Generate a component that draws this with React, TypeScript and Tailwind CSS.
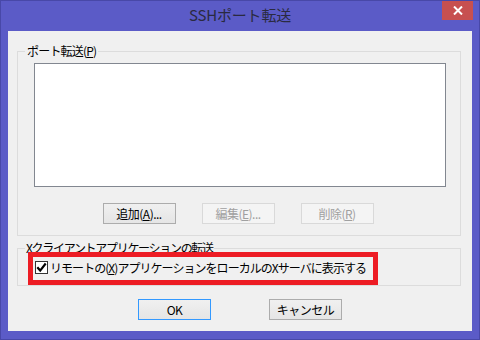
import React from "react";

const font = { fontFamily: '"Noto Sans CJK JP", "Noto Sans", sans-serif' };

function Btn({ children, disabled, def }: { children: React.ReactNode; disabled?: boolean; def?: boolean }) {
  const base = "w-[73px] h-[21px] flex items-center justify-center text-[12px] leading-none tracking-[-0.5px]";
  const cls = disabled
    ? "border border-[#d9d9d9] bg-[#f4f4f4] text-[#a0a0a0]"
    : def
    ? "border border-[#3399ff] bg-gradient-to-b from-[#f0f0f0] to-[#e5e5e5] text-[#000]"
    : "border border-[#acacac] bg-gradient-to-b from-[#f0f0f0] to-[#e5e5e5] text-[#000]";
  return <div className={`${base} ${cls}`}>{children}</div>;
}

export default function App() {
  return (
    <div className="w-[480px] h-[340px] bg-[#5b5bc7] border border-[#4848a8] flex flex-col" style={font}>
      <div className="h-[30px] flex items-start shrink-0">
        <div className="w-[37px]" />
        <div className="flex-1 h-[29px] flex items-center justify-center text-[15px] text-[#2a2a40] tracking-[-0.2px]">
          SSHポート転送
        </div>
        <div className="w-[31px] h-[19px] bg-[#c75050] flex items-center justify-center mr-[6px]">
          <svg width="10" height="9" viewBox="0 0 10 9">
            <path d="M1 0.5 L9 8.5 M9 0.5 L1 8.5" stroke="#fff" strokeWidth="2" />
          </svg>
        </div>
      </div>
      <div className="ml-[7px] w-[464px] h-[300px] bg-[#f0f0f0] flex flex-col">
        <div className="relative ml-[9px] mt-[20px] w-[444px] h-[185px] border border-[#dcdcdc] flex flex-col">
          <div className="absolute left-[7px] -top-[9px] px-[2px] bg-[#f0f0f0] text-[12px] leading-[16px] tracking-[-0.8px] text-[#000]">
            ポート転送(<span className="underline">P</span>)
          </div>
          <div className="ml-[16px] mt-[11px] w-[412px] h-[124px] border border-[#828790] bg-white" />
          <div className="mt-[16px] flex justify-center gap-[26px] pr-[2px]">
            <Btn>
              追加(<span className="underline">A</span>)...
            </Btn>
            <Btn disabled>
              編集(<span className="underline">E</span>)...
            </Btn>
            <Btn disabled>
              削除(<span className="underline">R</span>)
            </Btn>
          </div>
        </div>
        <div className="relative ml-[9px] mt-[12px] w-[444px] h-[38px] border border-[#dcdcdc]">
          <div className="absolute left-[7px] -top-[9px] px-[1px] bg-[#f0f0f0] text-[12px] leading-[16px] tracking-[-1.3px] text-[#000]">
            Xクライアントアプリケーションの転送
          </div>
          <div className="flex items-center mt-[12px] ml-[17px]">
            <div className="w-[13px] h-[13px] border border-[#333] bg-white flex items-center justify-center">
              <svg width="11" height="11" viewBox="0 0 11 11">
                <path d="M1.3 5.3 L4.2 8.6 L9.7 1.5" stroke="#000" strokeWidth="2.2" fill="none" />
              </svg>
            </div>
            <div className="ml-[2px] text-[12px] leading-none tracking-[-0.95px] text-[#000]">
              リモートの(<span className="underline">X</span>)アプリケーションをローカルのXサーバに表示する
            </div>
          </div>
          <div className="absolute left-[10px] top-[3px] w-[350px] h-[33px] border-[5px] border-[#ed1c24]" />
        </div>
        <div className="mt-[13px] flex justify-center gap-[58px]">
          <Btn def>OK</Btn>
          <Btn>キャンセル</Btn>
        </div>
      </div>
    </div>
  );
}
